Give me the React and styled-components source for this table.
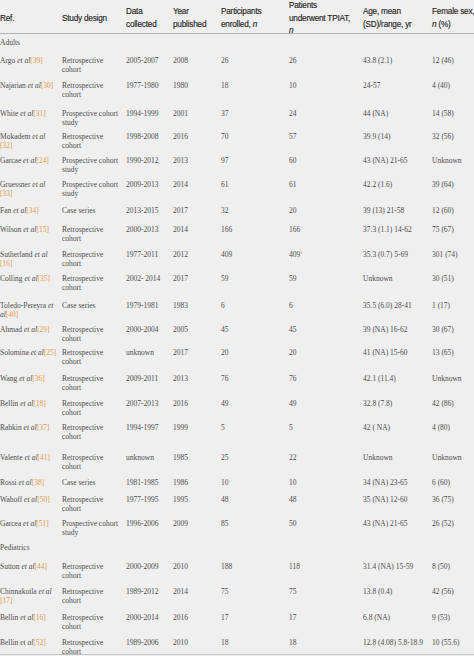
import React from "react";
import styled, { createGlobalStyle } from "styled-components";

const GlobalStyle = createGlobalStyle`
  html, body { margin: 0; padding: 0; background: #efefef; }
`;

const COLS = "62px 64px 47px 48px 68px 74px 69px 1fr";

const Page = styled.div`
  width: 474px;
  height: 656px;
  overflow: hidden;
  background: #efefef;
`;

const HeadRow = styled.div`
  display: grid;
  grid-template-columns: ${COLS};
  height: 33px;
  align-items: center;
  border-bottom: 1px solid #b3b3b3;
  font-family: "Liberation Sans", Arial, sans-serif;
  font-size: 8.2px;
  letter-spacing: -0.2px;
  line-height: 12.5px;
  color: #262626;
  -webkit-text-stroke: 0.15px #262626;
  white-space: nowrap;
`;

const Body = styled.div`
  padding-top: 2px;
  border-bottom: 1px solid #c4c4c4;
`;

const Row = styled.div`
  display: grid;
  grid-template-columns: ${COLS};
  height: ${(p) => p.$h}px;
  box-sizing: border-box;
  padding-top: 3px;
  align-items: start;
  font-family: "Liberation Serif", "Times New Roman", serif;
  font-size: 7.5px;
  line-height: 8.5px;
  color: #4d4d4d;
  white-space: nowrap;
`;

const Section = styled.div`
  height: ${(p) => p.$h}px;
  box-sizing: border-box;
  padding-top: 3px;
  font-family: "Liberation Serif", "Times New Roman", serif;
  font-size: 7.5px;
  line-height: 8.5px;
  color: #4d4d4d;
`;

const Cite = styled.span`
  color: #e39a4c;
`;

const Sup = styled.sup`
  color: #e39a4c;
  font-size: 5px;
  line-height: 0;
`;

const Ref = ({ name, cite, wrap }) => (
  <span>
    {name} <i>et al</i>
    {wrap && <br />}
    <Cite>[{cite}]</Cite>
  </span>
);

const RS = (
  <>
    Retrospective
    <br />
    cohort
  </>
);
const PS = (
  <>
    Prospective cohort
    <br />
    study
  </>
);
const CS = "Case series";

const adults = [
  [25, <Ref name="Argo" cite="39" />, RS, "2005-2007", "2008", "26", "26", "43.8 (2.1)", "12 (46)"],
  [28, <Ref name="Najarian" cite="30" />, RS, "1977-1980", "1980", "18", "10", "24-57", "4 (40)"],
  [23, <Ref name="White" cite="31" />, PS, "1994-1999", "2001", "37", "24", "44 (NA)", "14 (58)"],
  [24, <Ref name="Mokadem" cite="32" wrap />, RS, "1998-2008", "2016", "70", "57", "39.9 (14)", "32 (56)"],
  [24, <Ref name="Garcae" cite="24" />, PS, "1990-2012", "2013", "97", "60", "43 (NA) 21-65", "Unknown"],
  [26, <Ref name="Gruessner" cite="33" wrap />, PS, "2009-2013", "2014", "61", "61", "42.2 (1.6)", "39 (64)"],
  [19, <Ref name="Fan" cite="34" />, CS, "2013-2015", "2017", "32", "20", "39 (13) 21-58", "12 (60)"],
  [25, <Ref name="Wilson" cite="15" />, RS, "2000-2013", "2014", "166", "166", "37.3 (1.1) 14-62", "75 (67)"],
  [24, <Ref name="Sutherland" cite="16" wrap />, RS, "1977-2011", "2012", "409", <>409<Sup>1</Sup></>, "35.3 (0.7) 5-69", "301 (74)"],
  [27, <Ref name="Colling" cite="35" />, RS, "2002- 2014", "2017", "59", "59", "Unknown", "30 (51)"],
  [
    24,
    <span>
      Toledo-Pereyra <i>et</i>
      <br />
      <i>al</i>
      <Cite>[40]</Cite>
    </span>,
    CS, "1979-1981", "1983", "6", "6", "35.5 (6.0) 28-41", "1 (17)",
  ],
  [23, <Ref name="Ahmad" cite="29" />, RS, "2000-2004", "2005", "45", "45", "39 (NA) 16-62", "30 (67)"],
  [26, <Ref name="Solomina" cite="25" />, RS, "unknown", "2017", "20", "20", "41 (NA) 15-60", "13 (65)"],
  [25, <Ref name="Wang" cite="36" />, RS, "2009-2011", "2013", "76", "76", "42.1 (11.4)", "Unknown"],
  [24, <Ref name="Bellin" cite="18" />, RS, "2007-2013", "2016", "49", "49", "32.8 (7.8)", "42 (86)"],
  [30, <Ref name="Rabkin" cite="37" />, RS, "1994-1997", "1999", "5", "5", "42 ( NA)", "4 (80)"],
  [25, <Ref name="Valente" cite="41" />, RS, "unknown", "1985", "25", "22", "Unknown", "Unknown"],
  [17, <Ref name="Rossi" cite="38" />, CS, "1981-1985", "1986", "10", "10", "34 (NA) 23-65", "6 (60)"],
  [24, <Ref name="Wahoff" cite="50" />, RS, "1977-1995", "1995", "48", "48", "35 (NA) 12-60", "36 (75)"],
  [24, <Ref name="Garcea" cite="51" />, PS, "1996-2006", "2009", "85", "50", "43 (NA) 21-65", "26 (52)"],
];

const pediatrics = [
  [25, <Ref name="Sutton" cite="44" />, RS, "2000-2009", "2010", "188", "118", "31.4 (NA) 15-59", "8 (50)"],
  [26, <Ref name="Chinnakotla" cite="17" wrap />, RS, "1989-2012", "2014", "75", "75", "13.8 (0.4)", "42 (56)"],
  [25, <Ref name="Bellin" cite="16" />, RS, "2000-2014", "2016", "17", "17", "6.8 (NA)", "9 (53)"],
  [18, <Ref name="Bellin" cite="52" />, RS, "1989-2006", "2010", "18", "18", "12.8 (4.08) 5.8-18.9", "10 (55.6)"],
];

const DataRow = ({ row }) => {
  const [h, ...cells] = row;
  return (
    <Row $h={h}>
      {cells.map((c, i) => (
        <div key={i}>{c}</div>
      ))}
    </Row>
  );
};

export default function App() {
  return (
    <Page>
      <GlobalStyle />
      <HeadRow>
        <div>Ref.</div>
        <div>Study design</div>
        <div>
          Data
          <br />
          collected
        </div>
        <div>
          Year
          <br />
          published
        </div>
        <div>
          Participants
          <br />
          enrolled, <i>n</i>
        </div>
        <div>
          Patients
          <br />
          underwent TPIAT,
          <br />
          <i>n</i>
        </div>
        <div>
          Age, mean
          <br />
          (SD)/range, yr
        </div>
        <div>
          Female sex,
          <br />
          <i>n</i> (%)
        </div>
      </HeadRow>
      <Body>
        <Section $h={18}>Adults</Section>
        {adults.map((r, i) => (
          <DataRow key={"a" + i} row={r} />
        ))}
        <Section $h={19}>Pediatrics</Section>
        {pediatrics.map((r, i) => (
          <DataRow key={"p" + i} row={r} />
        ))}
      </Body>
    </Page>
  );
}
